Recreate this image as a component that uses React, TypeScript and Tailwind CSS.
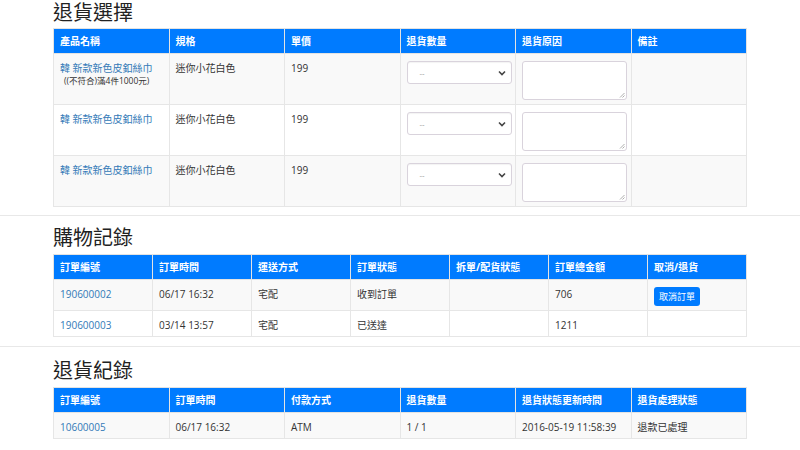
const font = { fontFamily: '"Open Sans", "Noto Sans CJK TC", sans-serif' };

function Th({ children }: { children: React.ReactNode }) {
  return (
    <th className="border border-[#e3e3e3] bg-[#007bff] px-[6px] py-[5px] text-left text-[10px] font-bold leading-[14px] text-white">
      {children}
    </th>
  );
}

function Td({ children }: { children?: React.ReactNode }) {
  return (
    <td className="border border-[#e6e6e6] px-[6px] pt-[7px] pb-[4px] align-top text-[10px] leading-[14px] text-[#333]">
      {children}
    </td>
  );
}

function Select() {
  return (
    <div className="flex h-[23px] w-[105px] items-center justify-between rounded-[3px] border border-[#d9d3dc] bg-white pr-[5px] pl-[12px] shadow-[inset_0_1px_1px_rgba(0,0,0,0.05)]">
      <span className="text-[8px] text-[#999]">--</span>
      <svg width="8" height="6" viewBox="0 0 8 6">
        <path d="M1 1.5 L4 4.5 L7 1.5" fill="none" stroke="#444" strokeWidth="1.6" />
      </svg>
    </div>
  );
}

function Textarea() {
  return (
    <div className="relative h-[39px] w-[105px] rounded-[3px] border border-[#d9d3dc] bg-white">
      <svg className="absolute bottom-[1px] right-[1px]" width="6" height="6" viewBox="0 0 6 6">
        <path d="M5.5 1 L1 5.5 M5.5 3.5 L3.5 5.5" stroke="#999" strokeWidth="0.8" />
      </svg>
    </div>
  );
}

const returnItems = [{ note: "((不符合)滿4件1000元)" }, { note: "" }, { note: "" }];

const orders = [
  { id: "190600002", time: "06/17 16:32", ship: "宅配", status: "收到訂單", total: "706", cancel: true },
  { id: "190600003", time: "03/14 13:57", ship: "宅配", status: "已送達", total: "1211", cancel: false },
];

export default function App() {
  return (
    <div className="min-h-[450px] bg-white" style={font}>
      <section className="mx-auto w-[694px]">
        <h2 className="mb-[3px] pt-[1px] text-[20px] font-normal leading-[24px] text-[#222]">退貨選擇</h2>
        <table className="w-full table-fixed border-collapse">
          <thead>
            <tr>
              <Th>產品名稱</Th>
              <Th>規格</Th>
              <Th>單價</Th>
              <Th>退貨數量</Th>
              <Th>退貨原因</Th>
              <Th>備註</Th>
            </tr>
          </thead>
          <tbody>
            {returnItems.map((item, i) => (
              <tr key={i} className={i % 2 === 0 ? "bg-[#f9f9f9]" : "bg-white"}>
                <Td>
                  <div className="text-[#337ab7]">韓 新款新色皮釦絲巾</div>
                  {item.note && (
                    <div className="ml-[4px] text-[8.5px] leading-[12px] text-[#333]">{item.note}</div>
                  )}
                </Td>
                <Td>迷你小花白色</Td>
                <Td>199</Td>
                <Td>
                  <Select />
                </Td>
                <Td>
                  <Textarea />
                </Td>
                <Td />
              </tr>
            ))}
          </tbody>
        </table>
      </section>

      <hr className="mt-[8px] border-[#e8e8e8]" />

      <section className="mx-auto w-[694px]">
        <h2 className="mb-[4px] pt-[10px] text-[20px] font-normal leading-[24px] text-[#222]">購物記錄</h2>
        <table className="w-full table-fixed border-collapse">
          <thead>
            <tr>
              <Th>訂單編號</Th>
              <Th>訂單時間</Th>
              <Th>運送方式</Th>
              <Th>訂單狀態</Th>
              <Th>拆單/配貨狀態</Th>
              <Th>訂單總金額</Th>
              <Th>取消/退貨</Th>
            </tr>
          </thead>
          <tbody>
            {orders.map((o, i) => (
              <tr key={o.id} className={i % 2 === 0 ? "bg-[#f9f9f9]" : "bg-white"}>
                <Td>
                  <span className="text-[#337ab7]">{o.id}</span>
                </Td>
                <Td>{o.time}</Td>
                <Td>{o.ship}</Td>
                <Td>{o.status}</Td>
                <Td />
                <Td>{o.total}</Td>
                <Td>
                  {o.cancel && (
                    <button className="block h-[19px] rounded-[3px] bg-[#007bff] px-[5px] text-[9px] leading-[19px] text-white">
                      取消訂單
                    </button>
                  )}
                </Td>
              </tr>
            ))}
          </tbody>
        </table>
      </section>

      <hr className="mt-[9px] border-[#e8e8e8]" />

      <section className="mx-auto w-[694px]">
        <h2 className="mb-[4px] pt-[12px] text-[20px] font-normal leading-[24px] text-[#222]">退貨紀錄</h2>
        <table className="w-full table-fixed border-collapse">
          <thead>
            <tr>
              <Th>訂單編號</Th>
              <Th>訂單時間</Th>
              <Th>付款方式</Th>
              <Th>退貨數量</Th>
              <Th>退貨狀態更新時間</Th>
              <Th>退貨處理狀態</Th>
            </tr>
          </thead>
          <tbody>
            <tr className="bg-[#f9f9f9]">
              <Td>
                <span className="text-[#337ab7]">10600005</span>
              </Td>
              <Td>06/17 16:32</Td>
              <Td>ATM</Td>
              <Td>1 / 1</Td>
              <Td>2016-05-19 11:58:39</Td>
              <Td>退款已處理</Td>
            </tr>
          </tbody>
        </table>
      </section>
    </div>
  );
}
